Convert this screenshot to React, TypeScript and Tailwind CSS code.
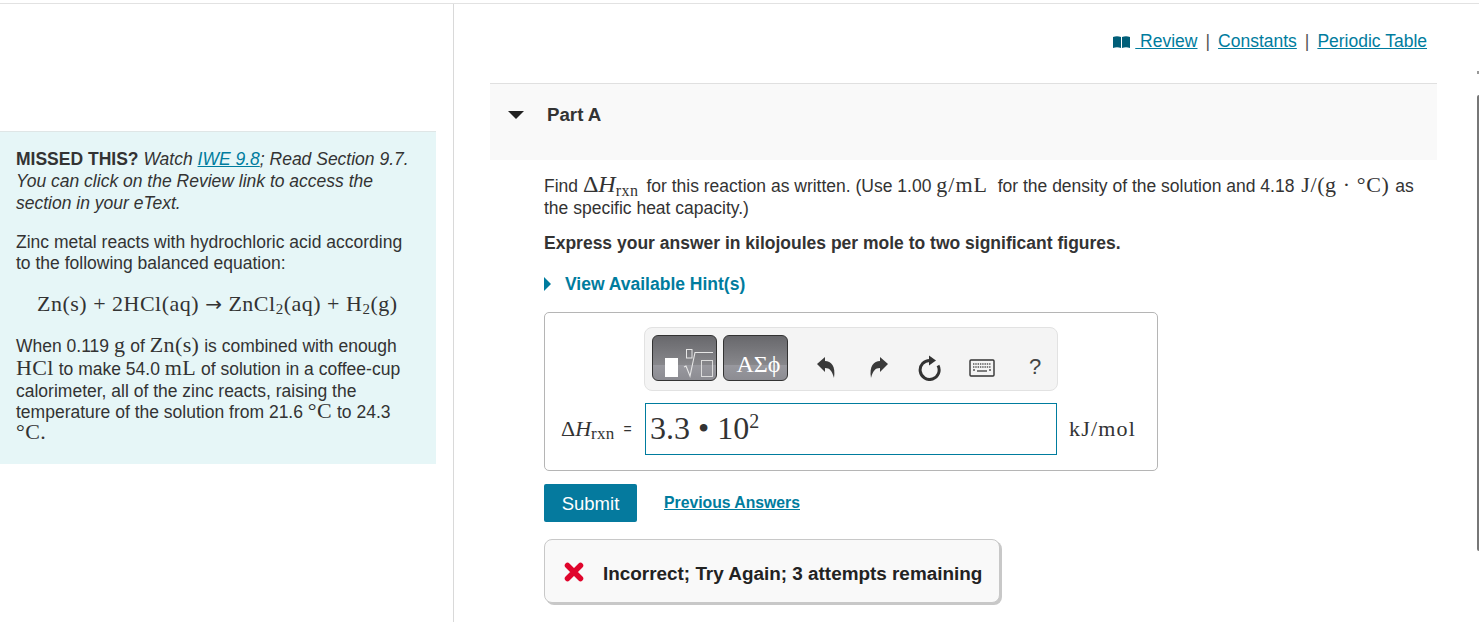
const sans = "font-['Liberation_Sans',Arial,sans-serif]"
const math = "font-['Liberation_Serif','Times_New_Roman',serif]"
const subCls = "static text-[15px] leading-none align-[-3px]"
const btnBg = "bg-[linear-gradient(#68686c,#88888c_67%,#98989e_67%,#8c8c92)]"

function M({ children }: { children: React.ReactNode }) {
	return <span className={`${math} text-[22px] leading-none tracking-[0.4px] text-[#333]`}>{children}</span>
}

function UndoIcon({ flip }: { flip?: boolean }) {
	return (
		<svg width="20" height="22" viewBox="0 0 20 22" className={flip ? "-scale-x-100" : ""}>
			<path d="M1 8 L9 1 V5 C15 5 20 10 18 22 C16 15 14 12 9 12 V16 Z" fill="#3a3a3a" />
		</svg>
	)
}

function RefreshIcon() {
	return (
		<svg width="24" height="26" viewBox="0 0 24 26">
			<path d="M12 5.5 A9.5 9.5 0 1 0 20 10.5" fill="none" stroke="#333" strokeWidth="3" />
			<path d="M11 0.5 L18 5.5 L11 10.5 Z" fill="#333" />
		</svg>
	)
}

function KeyboardIcon() {
	return (
		<svg width="26" height="18" viewBox="0 0 26 18">
			<rect x="1" y="1" width="24" height="16" rx="1" fill="#f4f4f4" stroke="#333" strokeWidth="1.4" />
			<path d="M4 5 H22 M4 8 H22" stroke="#555" strokeWidth="1.6" strokeDasharray="1.4 0.9" />
			<path d="M4 11 H6 M20 11 H22 M8 12 H18" stroke="#555" strokeWidth="1.6" />
		</svg>
	)
}

function TemplateIcon() {
	return (
		<svg width="63" height="44" viewBox="0 0 63 44" className="absolute inset-0">
			<rect x="12" y="22" width="13" height="19" fill="#fff" />
			<rect x="33.5" y="13.5" width="5.5" height="8.5" fill="none" stroke="#e6e6e6" />
			<path d="M31 31 L33 30 L37 40 L42 16.5 H60" fill="none" stroke="#e6e6e6" strokeWidth="1.1" />
			<rect x="48.5" y="24.5" width="11" height="16" fill="none" stroke="#dcdcdc" />
		</svg>
	)
}

export default function App() {
	return (
		<div className={`${sans} relative w-[1479px] h-[622px] overflow-hidden bg-white text-[#333] text-[17.5px]`}>
			<div className="h-[4px] border-b border-[#e2e2e2]" />
			<div className="flex h-[618px]">
				<div className="w-[454px] shrink-0 border-r border-[#d9d9d9] pt-[127px]">
					<div className="w-[436px] h-[333px] bg-[#e6f6f7] border-t border-[#dfe6e6] px-4 pt-[16px] leading-[22px]">
						<p className="italic whitespace-nowrap">
							<b className="not-italic">MISSED THIS?</b> Watch{" "}
							<a className="text-[#007c9e] underline">IWE 9.8</a>; Read Section 9.7.
							<br />
							You can click on the Review link to access the
							<br />
							section in your eText.
						</p>
						<p className="mt-[18px] leading-[21px] whitespace-nowrap">
							Zinc metal reacts with hydrochloric acid according
							<br />
							to the following balanced equation:
						</p>
						<p className={`${math} mt-[18px] ml-[21px] text-[22px] tracking-[0.5px] leading-[24px] whitespace-nowrap`}>
							Zn(s) + 2HCl(aq) <span className="font-['DejaVu_Sans'] text-[20px] leading-none">→</span> ZnCl<sub className={subCls}>2</sub>(aq) + H
							<sub className={subCls}>2</sub>(g)
						</p>
						<div className="mt-[17px] leading-[21px]">
							<div className="h-[23px] leading-[23px] whitespace-nowrap">
								When 0.119 <M>g</M> of <M>Zn(s)</M> is combined with enough
							</div>
							<div className="h-[24px] leading-[23px] whitespace-nowrap">
								<M>HCl</M> to make 54.0 <M>mL</M> of solution in a coffee-cup
							</div>
							<div className="h-[19px] whitespace-nowrap">calorimeter, all of the zinc reacts, raising the</div>
							<div className="h-[21px] whitespace-nowrap">
								temperature of the solution from 21.6 <M>°C</M> to 24.3
							</div>
							<div className="h-[21px]">
								<M>°C.</M>
							</div>
						</div>
					</div>
				</div>

				<div className="w-[947px] ml-[36px] shrink-0">
					<div className="flex justify-end items-center h-[79px] pb-[4px] pr-[10px] text-[#007c9e]">
						<svg width="17" height="12" viewBox="0 0 17 12" className="mr-[5px]">
							<path d="M0 1 Q4 -0.5 8 1 V12 Q4 10.5 0 12 Z M9 1 Q13 -0.5 17 1 V12 Q13 10.5 9 12 Z" fill="#005e78" />
						</svg>
						<a className="underline">&nbsp;Review</a>
						<span className="text-[#555] mx-[8px]">|</span>
						<a className="underline">Constants</a>
						<span className="text-[#555] mx-[8px]">|</span>
						<a className="underline">Periodic Table</a>
					</div>

					<div className="flex items-center h-[77px] bg-[#f9f9f9] border-t border-[#e0e0e0] pb-[15px]">
						<div className="ml-[18px] w-0 h-0 border-x-[8px] border-x-transparent border-t-[8px] border-t-[#222]" />
						<span className="ml-[23px] pt-[2px] text-[18.7px] font-bold">Part A</span>
					</div>

					<div className="pl-[54px]">
						<div className="mt-[12px] leading-[22px] whitespace-nowrap">
							<div className="h-[25px]">
								Find{" "}
								<span className={`${math} text-[24px] leading-none mr-[3px]`}>
									Δ<i>H</i>
									<sub className="static text-[16px] tracking-[0.5px] leading-none align-[-4px]">rxn</sub>
								</span>{" "}
								for this reaction as written. (Use 1.00{" "}
								<span className={`${math} text-[22px] leading-none tracking-[1px]`}>g/mL</span>&nbsp; for the density of the solution and 4.18{" "}
								<span className={`${math} text-[22px] leading-none tracking-[0.6px] ml-[2px] mr-[1px]`}>J/(g · °C)</span> as
							</div>
							<div className="h-[22px]">the specific heat capacity.)</div>
						</div>
						<p className="mt-[13px] font-bold leading-[22px]">Express your answer in kilojoules per mole to two significant figures.</p>
						<div className="mt-[19px] flex items-center h-[22px] text-[#007c9e] font-bold">
							<div className="w-0 h-0 border-y-[7px] border-y-transparent border-l-[7px] border-l-[#007c9e]" />
							<span className="ml-[14px]">View Available Hint(s)</span>
						</div>

						<div className="mt-[17px] w-[614px] h-[159px] rounded-[5px] border border-[#b5b5b5] pt-[14px]">
							<div className="ml-[99px] w-[414px] h-[64px] rounded-[8px] border border-[#e2e2e2] bg-[#f4f4f4] flex items-start pl-[7px] pt-[7px]">
								<div className={`relative w-[65px] h-[46px] shrink-0 rounded-[6px] border border-[#333] ${btnBg} overflow-hidden`}>
									<TemplateIcon />
								</div>
								<div className={`${math} ml-[6px] w-[65px] h-[46px] shrink-0 rounded-[6px] border border-[#333] ${btnBg} pl-[6px] text-white text-[24px] leading-[56px] text-center`}>
									ΑΣϕ
								</div>
								<div className="ml-[27px] mt-[21px] w-[22px] flex justify-center">
									<UndoIcon />
								</div>
								<div className="ml-[31px] mt-[21px] w-[22px] flex justify-center">
									<UndoIcon flip />
								</div>
								<div className="ml-[27px] mt-[20px] w-[26px] flex justify-center">
									<RefreshIcon />
								</div>
								<div className="ml-[26px] mt-[24px]">
									<KeyboardIcon />
								</div>
								<span className="ml-[34px] mt-[19px] text-[22px] leading-[26px] text-[#444]">?</span>
							</div>

							<div className="flex items-center mt-[12px]">
								<div className={`${math} w-[100px] pl-[16px] pb-[2px] text-[22px] whitespace-nowrap`}>
									Δ<i>H</i>
									<sub className="static text-[17px] tracking-[0.3px] leading-none align-[-3px]">rxn</sub>
									<span className={`${sans} text-[14px] ml-[9px] align-[2px]`}>=</span>
								</div>
								<div className={`${math} w-[412px] h-[52px] border border-[#007c9e] pl-[4px] text-[32px] leading-[48px] whitespace-nowrap`}>
									3.3 • 10<sup className="static text-[20px] leading-none align-[11px]">2</sup>
								</div>
								<span className={`${math} ml-[12px] mb-[2px] text-[22px] tracking-[1.2px]`}>kJ/mol</span>
							</div>
						</div>

						<div className="flex items-center mt-[13px]">
							<button className="w-[93px] h-[38px] rounded-[2px] bg-[#057a9e] pt-[1px] text-white text-[18.5px]">Submit</button>
							<a className="ml-[27px] text-[#007c9e] font-bold underline text-[15.75px]">Previous Answers</a>
						</div>

						<div className="mt-[17px] flex items-center w-[456px] h-[64px] rounded-[8px] border border-[#c8c8c8] bg-[#f9f9f9] shadow-[2px_2px_0_#c8c8c8]">
							<svg width="20" height="20" viewBox="0 0 20 20" className="ml-[19px] mt-[1px]">
								<path d="M3.5 3.5 L16.5 16.5 M16.5 3.5 L3.5 16.5" stroke="#e0052c" strokeWidth="5.5" strokeLinecap="round" />
							</svg>
							<span className="ml-[19px] pt-[6px] font-bold text-[18.9px] text-[#222]">Incorrect; Try Again; 3 attempts remaining</span>
						</div>
					</div>
				</div>
			</div>
			<div className="absolute right-0 top-[95px] w-[2px] h-[456px] bg-[#777] rounded-l" />
			<div className="absolute right-0 top-[71px] w-[2px] h-[3px] bg-[#999]" />
		</div>
	)
}
